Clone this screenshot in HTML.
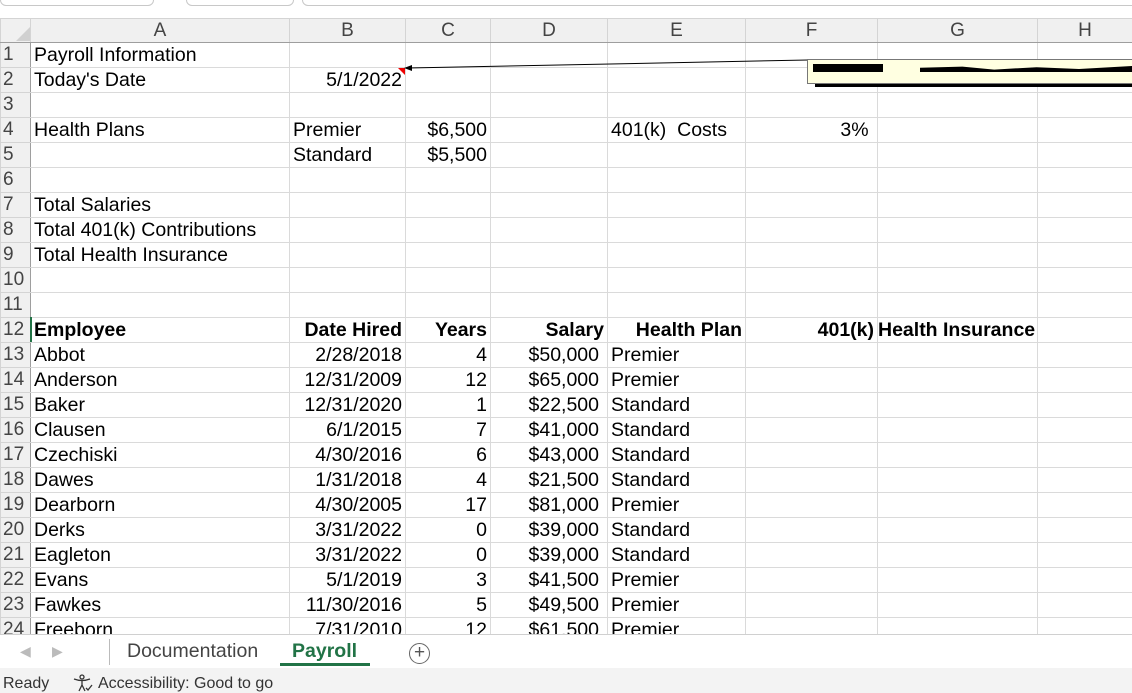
<!DOCTYPE html>
<html><head><meta charset="utf-8"><style>
*{margin:0;padding:0;box-sizing:border-box}
body{width:1132px;height:693px;overflow:hidden;background:#fff;font-family:"Liberation Sans",Arial,sans-serif;position:relative}
.top{position:absolute;left:0;top:0;width:1132px;height:18px;background:#fff}
.pill{position:absolute;top:-10px;height:16px;border:1px solid #c8c8c8;border-radius:6px;background:#fff}
.grid{position:absolute;left:0;top:18px;width:1132px;height:616px;overflow:hidden}
table{border-collapse:collapse;table-layout:fixed;width:1132px}
td{height:25px;border:1px solid #dadada;font-size:19.5px;line-height:22px;padding:0 3px;white-space:nowrap;overflow:visible;color:#000}
tr.h td{height:24px;background:#f0f0f0;color:#444;text-align:center;border-color:#d4d4d4;border-bottom:1px solid #9e9e9e;font-size:19px}
td.rh{background:#f0f0f0;color:#444;text-align:left;padding-left:2px;border-color:#d4d4d4;border-right:1px solid #9e9e9e;font-size:19px}
.r{text-align:right}.b{font-weight:bold}
.m{text-align:right;padding-right:8px}
.tabs{position:absolute;left:0;top:634px;width:1132px;height:34px;background:#fff;border-top:1px solid #d0d0d0}
.status{position:absolute;left:0;top:668px;width:1132px;height:25px;background:#f3f3f3;font-size:16px;color:#333}
</style></head><body>
<div class="top"><div class="pill" style="left:0;width:154px"></div><div class="pill" style="left:186px;width:108px"></div><div class="pill" style="left:302px;width:840px"></div></div>
<div class="grid"><table>
<colgroup><col style="width:30px"><col style="width:259px"><col style="width:116px"><col style="width:85px"><col style="width:117px"><col style="width:138px"><col style="width:132px"><col style="width:160px"><col style="width:95px"></colgroup>
<tr class="h"><td style="background:#f0f0f0"><div style="width:0;height:0;border-left:14px solid transparent;border-bottom:14px solid #d0d0d0;margin-left:12px;margin-top:6px"></div></td><td>A</td><td>B</td><td>C</td><td>D</td><td>E</td><td>F</td><td>G</td><td class="r">H</td></tr>
<tr><td class="rh">1</td><td>Payroll Information</td><td></td><td></td><td></td><td></td><td></td><td></td><td></td></tr>
<tr><td class="rh">2</td><td>Today's Date</td><td class="r" style="position:relative">5/1/2022<div style="position:absolute;right:0;top:0;width:0;height:0;border-left:7px solid transparent;border-top:7px solid #e00"></div></td><td></td><td></td><td></td><td></td><td></td><td></td></tr>
<tr><td class="rh">3</td><td></td><td></td><td></td><td></td><td></td><td></td><td></td><td></td></tr>
<tr><td class="rh">4</td><td>Health Plans</td><td>Premier</td><td class="r">$6,500</td><td></td><td>401(k)&nbsp; Costs</td><td class="r">3%&nbsp;</td><td></td><td></td></tr>
<tr><td class="rh">5</td><td></td><td>Standard</td><td class="r">$5,500</td><td></td><td></td><td></td><td></td><td></td></tr>
<tr><td class="rh">6</td><td></td><td></td><td></td><td></td><td></td><td></td><td></td><td></td></tr>
<tr><td class="rh">7</td><td>Total Salaries</td><td></td><td></td><td></td><td></td><td></td><td></td><td></td></tr>
<tr><td class="rh">8</td><td>Total 401(k) Contributions</td><td></td><td></td><td></td><td></td><td></td><td></td><td></td></tr>
<tr><td class="rh">9</td><td>Total Health Insurance</td><td></td><td></td><td></td><td></td><td></td><td></td><td></td></tr>
<tr><td class="rh">10</td><td></td><td></td><td></td><td></td><td></td><td></td><td></td><td></td></tr>
<tr><td class="rh">11</td><td></td><td></td><td></td><td></td><td></td><td></td><td></td><td></td></tr>
<tr class="b"><td class="rh" style="font-weight:normal">12</td><td>Employee</td><td class="r">Date Hired</td><td class="r">Years</td><td class="r">Salary</td><td class="r">Health Plan</td><td class="r">401(k)</td><td style="padding-left:0">Health Insurance</td><td></td></tr>
<tr><td class="rh">13</td><td>Abbot</td><td class="r">2/28/2018</td><td class="r">4</td><td class="m">$50,000</td><td>Premier</td><td></td><td></td><td></td></tr>
<tr><td class="rh">14</td><td>Anderson</td><td class="r">12/31/2009</td><td class="r">12</td><td class="m">$65,000</td><td>Premier</td><td></td><td></td><td></td></tr>
<tr><td class="rh">15</td><td>Baker</td><td class="r">12/31/2020</td><td class="r">1</td><td class="m">$22,500</td><td>Standard</td><td></td><td></td><td></td></tr>
<tr><td class="rh">16</td><td>Clausen</td><td class="r">6/1/2015</td><td class="r">7</td><td class="m">$41,000</td><td>Standard</td><td></td><td></td><td></td></tr>
<tr><td class="rh">17</td><td>Czechiski</td><td class="r">4/30/2016</td><td class="r">6</td><td class="m">$43,000</td><td>Standard</td><td></td><td></td><td></td></tr>
<tr><td class="rh">18</td><td>Dawes</td><td class="r">1/31/2018</td><td class="r">4</td><td class="m">$21,500</td><td>Standard</td><td></td><td></td><td></td></tr>
<tr><td class="rh">19</td><td>Dearborn</td><td class="r">4/30/2005</td><td class="r">17</td><td class="m">$81,000</td><td>Premier</td><td></td><td></td><td></td></tr>
<tr><td class="rh">20</td><td>Derks</td><td class="r">3/31/2022</td><td class="r">0</td><td class="m">$39,000</td><td>Standard</td><td></td><td></td><td></td></tr>
<tr><td class="rh">21</td><td>Eagleton</td><td class="r">3/31/2022</td><td class="r">0</td><td class="m">$39,000</td><td>Standard</td><td></td><td></td><td></td></tr>
<tr><td class="rh">22</td><td>Evans</td><td class="r">5/1/2019</td><td class="r">3</td><td class="m">$41,500</td><td>Premier</td><td></td><td></td><td></td></tr>
<tr><td class="rh">23</td><td>Fawkes</td><td class="r">11/30/2016</td><td class="r">5</td><td class="m">$49,500</td><td>Premier</td><td></td><td></td><td></td></tr>
<tr><td class="rh">24</td><td>Freeborn</td><td class="r">7/31/2010</td><td class="r">12</td><td class="m">$61,500</td><td>Premier</td><td></td><td></td><td></td></tr>
</table>
<div style="position:absolute;left:30px;top:299px;width:2px;height:25px;background:#217346"></div>
</div>
<svg style="position:absolute;left:0;top:0" width="1132" height="693"><line x1="408" y1="68" x2="808" y2="60" stroke="#000" stroke-width="1"/><polygon points="404,68 412,65 412,71" fill="#000"/></svg>
<div style="position:absolute;left:807px;top:59px;width:330px;height:25px;background:#ffffe1;border:1px solid #777"></div>
<div style="position:absolute;left:813px;top:64px;width:70px;height:8px;background:#000"></div>
<div style="position:absolute;left:920px;top:66px;width:212px;height:6px;background:#000;clip-path:polygon(0 30%,20% 10%,35% 60%,55% 20%,75% 50%,100% 0,100% 100%,0 100%)"></div>
<div style="position:absolute;left:815px;top:84px;width:320px;height:3px;background:#000"></div>
<div class="tabs">
<span style="position:absolute;left:20px;top:8px;color:#bbb;font-size:14px">◀</span>
<span style="position:absolute;left:52px;top:8px;color:#bbb;font-size:14px">▶</span>
<div style="position:absolute;left:109px;top:4px;width:1px;height:26px;background:#bbb"></div>
<span style="position:absolute;left:127px;top:5px;font-size:19.5px;color:#444">Documentation</span>
<div style="position:absolute;left:280px;top:0;width:90px;height:31px;border-bottom:3px solid #217346;background:#fff"></div>
<span style="position:absolute;left:292px;top:5px;font-size:19.5px;color:#217346;font-weight:bold">Payroll</span>
<div style="position:absolute;left:409px;top:8px;width:21px;height:21px;border:1.5px solid #666;border-radius:50%;text-align:center;line-height:17px;font-size:19px;color:#555">+</div>
</div>
<div class="status">
<span style="position:absolute;left:3px;top:7px">Ready</span>
<svg style="position:absolute;left:72px;top:6px" width="22" height="18" viewBox="0 0 22 18" fill="none" stroke="#333" stroke-width="1.3"><circle cx="10" cy="3" r="2"/><path d="M2 5 Q10 8 18 5 M10 7 V11 M7 17 L10 11 L13 17"/><path d="M14 14 l2 2 l4 -5"/></svg>
<span style="position:absolute;left:98px;top:7px">Accessibility: Good to go</span>
</div>
</body></html>
